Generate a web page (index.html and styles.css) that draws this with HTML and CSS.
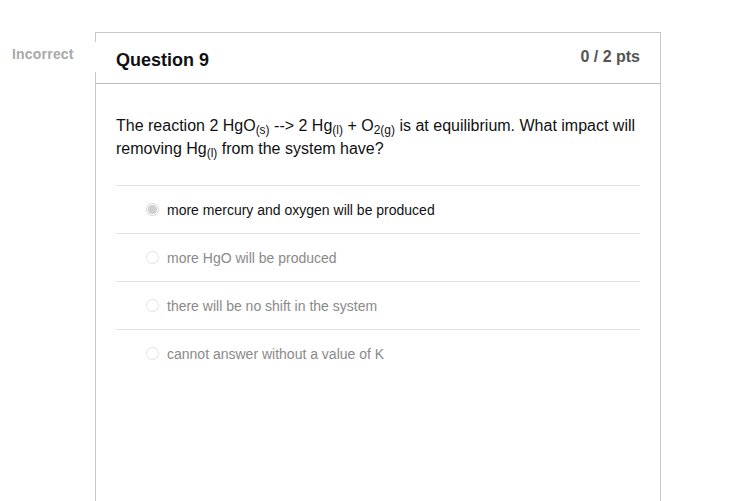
FILE: index.html
```html
<!DOCTYPE html>
<html>
<head>
<meta charset="utf-8">
<link rel="stylesheet" href="styles.css">
</head>
<body>
<div class="page">
  <div class="status">Incorrect</div>
  <div class="card">
    <div class="card-head">
      <div class="q-title">Question 9</div>
      <div class="q-pts">0 / 2 pts</div>
    </div>
    <div class="card-body">
      <p class="q-text">The reaction 2 HgO<sub>(s)</sub> --&gt; 2 Hg<sub>(l)</sub> + O<sub>2(g)</sub> is at equilibrium. What impact will removing Hg<sub>(l)</sub> from the system have?</p>
      <div class="answers">
        <div class="answer selected"><span class="radio checked"></span><span class="a-text">more mercury and oxygen will be produced</span></div>
        <div class="answer"><span class="radio"></span><span class="a-text">more HgO will be produced</span></div>
        <div class="answer"><span class="radio"></span><span class="a-text">there will be no shift in the system</span></div>
        <div class="answer"><span class="radio"></span><span class="a-text">cannot answer without a value of K</span></div>
      </div>
    </div>
  </div>
</div>
</body>
</html>
```
FILE: styles.css
```css
html, body {
  margin: 0;
  padding: 0;
  background: #fff;
  font-family: "Liberation Sans", Arial, sans-serif;
  color: #111;
}
.page {
  display: flex;
  align-items: flex-start;
  padding-top: 32px;
  height: 469px;
  overflow: hidden;
}
.status {
  width: 83px;
  padding-left: 12px;
  padding-top: 14px;
  box-sizing: content-box;
  font-size: 14px;
  font-weight: bold;
  color: #a9a9a9;
  line-height: 16px;
  letter-spacing: 0.2px;
  flex: none;
}
.card {
  position: relative;
  width: 564px;
  height: 480px;
  border: 1px solid #c8c8c8;
  border-bottom: none;
  flex: none;
}
.card::before {
  content: "";
  position: absolute;
  left: -1px;
  top: 9px;
  width: 1px;
  height: 30px;
  background: #fff;
}
.card-head {
  display: flex;
  justify-content: space-between;
  align-items: center;
  height: 50px;
  padding: 0 20px;
  border-bottom: 1px solid #bdbdbd;
}
.q-title {
  font-size: 18px;
  font-weight: bold;
  color: #111;
  padding-top: 4px;
}
.q-pts {
  font-size: 16px;
  font-weight: bold;
  color: #555;
  padding-bottom: 2px;
}
.card-body {
  padding: 30px 20px 0;
}
.q-text {
  margin: 0;
  font-size: 16px;
  line-height: 23px;
  color: #111;
}
.q-text sub {
  font-size: 12px;
  line-height: 1;
  vertical-align: -3px;
}
.answers {
  margin-top: 25px;
}
.answer {
  display: flex;
  align-items: center;
  height: 47px;
  border-top: 1px solid #e2e2e2;
  padding-left: 30px;
  font-size: 14px;
  color: #8a8a8a;
}
.answer.selected {
  color: #111;
}
.radio {
  width: 13px;
  height: 13px;
  box-sizing: border-box;
  border-radius: 50%;
  border: 1px solid #e3e3e3;
  background: #fff;
  margin-right: 8px;
  flex: none;
  display: flex;
  align-items: center;
  justify-content: center;
}
.radio.checked {
  border-color: #d4d4d4;
}
.radio.checked::after {
  content: "";
  width: 9px;
  height: 9px;
  border-radius: 50%;
  background: #cfcfcf;
}
```
